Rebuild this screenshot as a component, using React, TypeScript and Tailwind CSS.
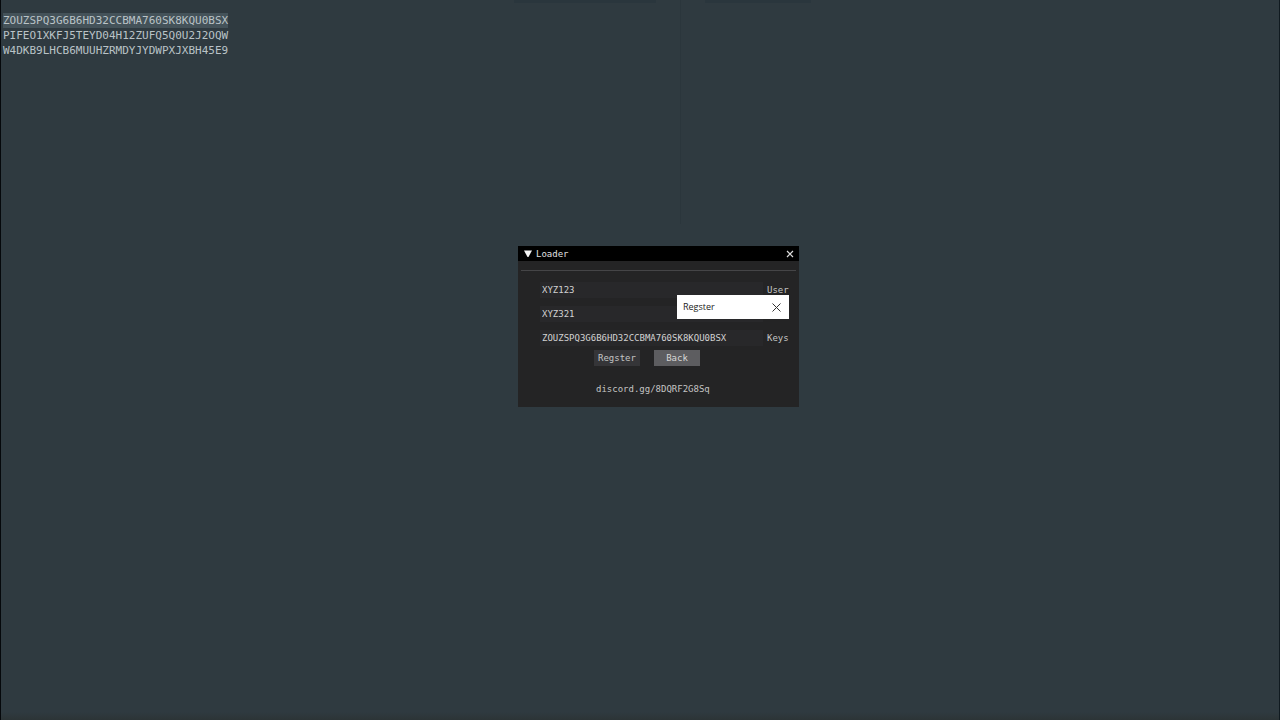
import { useState } from 'react';

const KEYS = [
    'ZOUZSPQ3G6B6HD32CCBMA760SK8KQU0BSX',
    'PIFEO1XKFJ5TEYD04H12ZUFQ5Q0U2J2OQW',
    'W4DKB9LHCB6MUUHZRMDYJYDWPXJXBH45E9',
];

function Field({ id, label, value, onChange }: { id: string; label: string; value: string; onChange: (v: string) => void }) {
    return (
        <div className="flex items-center h-4 gap-1">
            <input
                id={id}
                value={value}
                onChange={(e) => onChange(e.target.value)}
                className="flex-1 min-w-0 h-4 px-[2px] bg-[#28282a] text-[#d2d2d2] outline-none"
            />
            <label htmlFor={id} className="w-6 shrink-0 whitespace-nowrap">{label}</label>
        </div>
    );
}

export default function App() {
    const [user, setUser] = useState('XYZ123');
    const [pass, setPass] = useState('XYZ321');
    const [key, setKey] = useState(KEYS[0]);
    const [toast, setToast] = useState(true);

    return (
        <div className="relative min-h-screen overflow-hidden bg-[#2f3a40] border-x border-l-[#05080b] border-r-[#101a20]">
            {/* Faint ruler and tab shadows at the top of the editor */}
            <div className="absolute inset-x-0 top-0 flex justify-center gap-6 pl-11">
                <div className="w-[142px] h-[3px] bg-[#2a363d]" />
                <div className="w-px h-[224px] bg-[#2b363c]" />
                <div className="w-[106px] h-[3px] bg-[#2a363d]" />
            </div>
            <div className="absolute inset-x-0 bottom-0 h-2 bg-linear-to-b from-[#2f3a40] to-[#2c3436]" />

            {/* Key list */}
            <div className="relative pt-[13px] pl-[2px] font-['DejaVu_Sans_Mono',monospace] text-[11px] leading-[15px] text-[#bac3c7]">
                {KEYS.map((k, i) => (
                    <p key={k} className={i === 0 ? 'w-fit bg-[#445259]' : 'w-fit'}>{k}</p>
                ))}
            </div>

            {/* Loader window */}
            <section className="absolute left-[517px] top-[246px] w-[281px] bg-[#242425] font-['DejaVu_Sans_Mono',monospace] text-[9px] leading-4 text-[#c4c4c4]">
                <header className="flex items-center h-[15px] pl-[6px] pr-[5px] bg-black text-[#e0e0e0]">
                    <svg viewBox="0 0 8 8" className="w-2 h-2" fill="#f4f4f4">
                        <path d="M0 0.5h8L4.5 7h-1z" />
                    </svg>
                    <h1 className="flex-1 pl-1">Loader</h1>
                    <button aria-label="Close">
                        <svg viewBox="0 0 8 8" className="block w-2 h-2" stroke="#dcdcdc" strokeWidth="1.2">
                            <path d="M1 1l6 6M7 1l-6 6" />
                        </svg>
                    </button>
                </header>

                <hr className="mt-[9px] mx-[3px] border-[#454547]" />

                <form className="pt-[11px] pb-[10px] pl-[22px] pr-2" onSubmit={(e) => e.preventDefault()}>
                    <div className="flex flex-col gap-2">
                        <Field id="user" label="User" value={user} onChange={setUser} />
                        <Field id="pass" label="Pass" value={pass} onChange={setPass} />
                        <Field id="key" label="Keys" value={key} onChange={setKey} />
                    </div>
                    <div className="flex gap-[14px] mt-1 pl-[54px]">
                        <button type="submit" onClick={() => setToast(true)} className="w-[46px] h-4 bg-[#353538]">
                            Regster
                        </button>
                        <button type="button" className="w-[46px] h-4 bg-[#5d5d60] text-[#d6d6d6]">
                            Back
                        </button>
                    </div>
                    <a href="#discord" className="block w-fit mt-[15px] ml-[56px]">discord.gg/8DQRF2G8Sq</a>
                </form>

                {toast && (
                    <div role="dialog" aria-label="Regster" className="absolute right-[10px] top-[49px] flex items-center justify-between w-[112px] h-6 pl-[6px] pr-2 bg-white font-['Open_Sans',sans-serif] text-[#222]">
                        <span>Regster</span>
                        <button aria-label="Dismiss" onClick={() => setToast(false)}>
                            <svg viewBox="0 0 9 9" className="block w-[9px] h-[9px]" stroke="#333" strokeWidth="1">
                                <path d="M0.5 0.5l8 8M8.5 0.5l-8 8" />
                            </svg>
                        </button>
                    </div>
                )}
            </section>
        </div>
    );
}
